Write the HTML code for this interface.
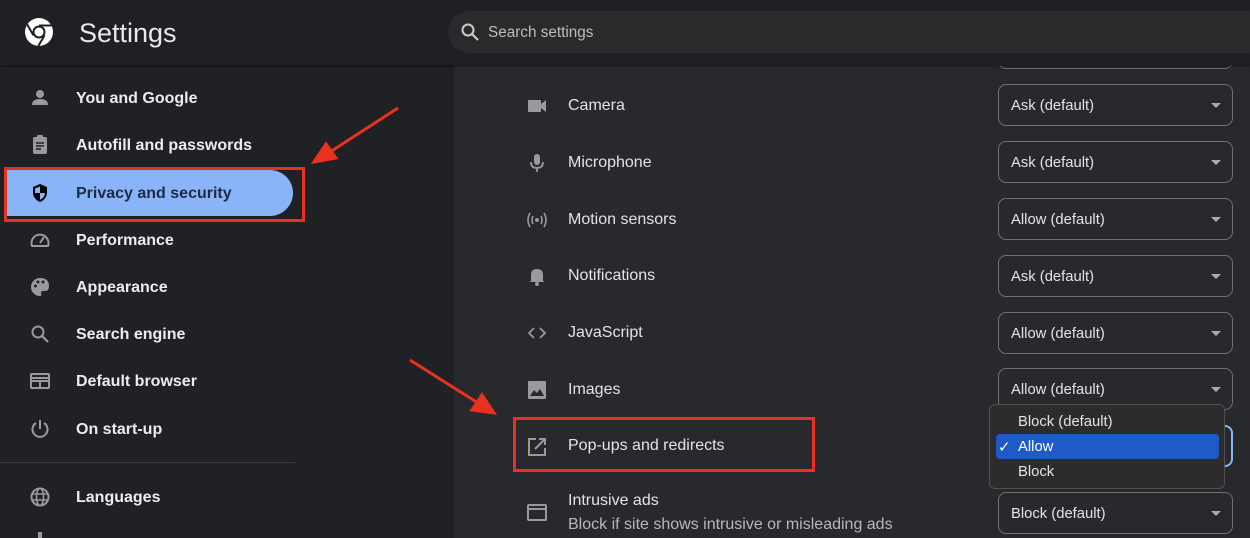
<!DOCTYPE html>
<html><head><style>
*{margin:0;padding:0;box-sizing:border-box}
body{width:1250px;height:538px;overflow:hidden;background:#202124;font-family:"Liberation Sans",sans-serif;color:#e3e3e3;position:relative}
.hdr{position:absolute;left:0;top:0;width:1250px;height:65px;background:#1f2023;box-shadow:0 1px 3px rgba(0,0,0,.5);z-index:2}
.title{position:absolute;left:79px;top:18px;font-size:27px;color:#e8e8e8}
.search{position:absolute;left:448px;top:11px;width:820px;height:42px;border-radius:21px;background:#2a2a2d}
.search span{position:absolute;left:40px;top:13px;font-size:15.3px;color:#bdbdbd}
.side{position:absolute;left:0;top:65px;width:454px;height:473px;background:#202124}
.item{position:absolute;left:0;height:46px;width:300px;font-size:16px;font-weight:bold;color:#ececec}
.item span{position:absolute;left:76px;top:15px}
.item svg{position:absolute;left:29px;top:12px}
.sel{left:5px;width:288px;background:#8ab4f8;border-radius:0 23px 23px 0;color:#1f2a44}
.main{position:absolute;left:454px;top:65px;width:796px;height:473px;background:#28292c}
.row{position:absolute;left:568px;font-size:16px;color:#e3e3e3}
.ic{position:absolute;left:526px}
.dd{position:absolute;left:998px;width:235px;height:42px;border:1px solid #707074;border-radius:8px;font-size:14.8px;color:#e3e3e3}
.dd span{position:absolute;left:12px;top:13px}
.dd i{position:absolute;right:11px;top:18px;border-left:5px solid transparent;border-right:5px solid transparent;border-top:5px solid #aaa}
.menu{position:absolute;left:989px;top:404px;width:236px;height:85px;background:#2d2b2b;border:1px solid #505050;border-radius:6px;font-size:14.8px;z-index:3}
.menu .t{position:absolute;left:28px}
.hl{position:absolute;left:6px;top:29px;width:223px;height:25px;background:#1f5bc7;border-radius:4px}
.red{position:absolute;border:3px solid #e8321f;z-index:4}
</style></head><body>
<div class="hdr">
<svg style="position:absolute;left:24px;top:17px" width="30" height="30" viewBox="0 0 30 30"><circle cx="15" cy="15" r="14" fill="#fff"/><circle cx="15" cy="15" r="6.5" fill="#1f2023"/><circle cx="15" cy="15" r="4.5" fill="#fff"/><path d="M15 8.5 L27.5 8.5" stroke="#1f2023" stroke-width="2"/><path d="M9.4 18.2 L3.2 7.5" stroke="#1f2023" stroke-width="2"/><path d="M20.6 18.2 L14.3 29" stroke="#1f2023" stroke-width="2"/></svg>
<div class="title">Settings</div>
<div class="search"><svg style="position:absolute;left:13px;top:12px" width="18" height="18" viewBox="0 0 18 18"><circle cx="7" cy="7" r="5.5" fill="none" stroke="#ccc" stroke-width="2"/><path d="M11 11 L17 17" stroke="#ccc" stroke-width="2.2"/></svg><span>Search settings</span></div>
</div>
<div class="side"></div>
<div class="item" style="top:75px"><svg width="22" height="22" viewBox="0 0 22 22"><circle cx="11" cy="7" r="4" fill="#9a9a9e"/><path d="M3 18 Q3 12 11 12 Q19 12 19 18Z" fill="#9a9a9e"/></svg><span>You and Google</span></div>
<div class="item" style="top:122px"><svg width="22" height="22" viewBox="0 0 22 22"><rect x="4" y="3" width="14" height="17" rx="2" fill="#9a9a9e"/><rect x="8" y="1" width="6" height="4" rx="1" fill="#9a9a9e"/><path d="M7 9h8M7 12h8M7 15h5" stroke="#202124" stroke-width="1.5"/></svg><span>Autofill and passwords</span></div>
<div class="item sel" style="top:170px"><svg style="left:24px" width="22" height="22" viewBox="0 0 22 22"><path d="M11 2 L18 5 V10 Q18 17 11 20 Q4 17 4 10 V5Z" fill="#000"/><path d="M11 4.5 V11 H16 Q15.5 16 11 17.8Z M11 11 H6 V6.5 L11 4.5Z" fill="#8ab4f8"/></svg><span style="left:71px">Privacy and security</span></div>
<div class="item" style="top:217px"><svg width="22" height="22" viewBox="0 0 22 22"><path d="M3 17 A8.5 8.5 0 1 1 19 17Z" fill="none" stroke="#9a9a9e" stroke-width="2"/><path d="M11 14 L15 8" stroke="#9a9a9e" stroke-width="2"/></svg><span>Performance</span></div>
<div class="item" style="top:264px"><svg width="22" height="22" viewBox="0 0 22 22"><path d="M11 2 A9 9 0 0 0 11 20 Q13 20 12 17 Q12 15 14 15 H16 Q20 15 20 10 Q20 2 11 2Z" fill="#9a9a9e"/><circle cx="6.5" cy="10" r="1.5" fill="#202124"/><circle cx="9" cy="6" r="1.5" fill="#202124"/><circle cx="14" cy="6" r="1.5" fill="#202124"/></svg><span>Appearance</span></div>
<div class="item" style="top:311px"><svg width="22" height="22" viewBox="0 0 22 22"><circle cx="9" cy="9" r="5.5" fill="none" stroke="#9a9a9e" stroke-width="2"/><path d="M13 13 L19 19" stroke="#9a9a9e" stroke-width="2.2"/></svg><span>Search engine</span></div>
<div class="item" style="top:358px"><svg width="22" height="22" viewBox="0 0 22 22"><rect x="2" y="4" width="18" height="14" rx="1" fill="none" stroke="#9a9a9e" stroke-width="2"/><path d="M2 8H20M11 11V18M3 11H19" stroke="#9a9a9e" stroke-width="2"/></svg><span>Default browser</span></div>
<div class="item" style="top:406px"><svg width="22" height="22" viewBox="0 0 22 22"><path d="M7 5 A7.5 7.5 0 1 0 15 5" fill="none" stroke="#9a9a9e" stroke-width="2"/><path d="M11 2V11" stroke="#9a9a9e" stroke-width="2"/></svg><span>On start-up</span></div>
<div style="position:absolute;left:0;top:462px;width:295px;height:1px;background:#3a3b3e"></div>
<div class="item" style="top:474px"><svg width="22" height="22" viewBox="0 0 22 22"><circle cx="11" cy="11" r="8.5" fill="none" stroke="#9a9a9e" stroke-width="2"/><ellipse cx="11" cy="11" rx="3.5" ry="8.5" fill="none" stroke="#9a9a9e" stroke-width="1.6"/><path d="M3 8H19M3 14H19" stroke="#9a9a9e" stroke-width="1.6"/></svg><span>Languages</span></div>
<div style="position:absolute;left:38px;top:532px;width:4px;height:6px;background:#9a9a9e"></div>
<div class="main"></div>
<div class="dd" style="border-top:none;border-radius:0 0 8px 8px;top:30px;height:39px"></div>
<div class="hdr" style="box-shadow:none;height:65px;background:#1f2023;z-index:1"></div>
<svg class="ic" style="top:97px" width="22" height="18" viewBox="0 0 22 18"><rect x="2" y="3" width="13" height="12" rx="1" fill="#9a9a9e"/><path d="M15 7 L20 3 V15 L15 11Z" fill="#9a9a9e"/></svg>
<div class="row" style="top:97px">Camera</div>
<svg class="ic" style="top:152px" width="22" height="22" viewBox="0 0 22 22"><rect x="8" y="2" width="6" height="11" rx="3" fill="#9a9a9e"/><path d="M5 10 Q5 16 11 16 Q17 16 17 10M11 16V20" fill="none" stroke="#9a9a9e" stroke-width="1.8"/></svg>
<div class="row" style="top:154px">Microphone</div>
<svg class="ic" style="top:210px" width="22" height="20" viewBox="0 0 22 20"><circle cx="11" cy="10" r="2" fill="#9a9a9e"/><path d="M7 6 Q5 10 7 14M15 6 Q17 10 15 14M4 3 Q0 10 4 17M18 3 Q22 10 18 17" fill="none" stroke="#9a9a9e" stroke-width="1.6"/></svg>
<div class="row" style="top:211px">Motion sensors</div>
<svg class="ic" style="top:265px" width="22" height="22" viewBox="0 0 22 22"><path d="M5 16 V10 Q5 4 11 4 Q17 4 17 10 V16 L19 17 H3Z" fill="#9a9a9e"/><circle cx="11" cy="19" r="2" fill="#9a9a9e"/></svg>
<div class="row" style="top:267px">Notifications</div>
<svg class="ic" style="top:323px" width="22" height="20" viewBox="0 0 22 20"><path d="M8 5 L3 10 L8 15M14 5 L19 10 L14 15" fill="none" stroke="#9a9a9e" stroke-width="1.8"/></svg>
<div class="row" style="top:324px">JavaScript</div>
<svg class="ic" style="top:379px" width="22" height="22" viewBox="0 0 22 22"><rect x="2" y="2" width="18" height="18" rx="1" fill="#9a9a9e"/><path d="M4 17 L8 11 L11 14 L14 10 L18 17Z" fill="#28292c"/></svg>
<div class="row" style="top:381px">Images</div>
<svg class="ic" style="top:436px" width="22" height="22" viewBox="0 0 22 22"><path d="M10 3H3V19H19V12" fill="none" stroke="#9a9a9e" stroke-width="2"/><path d="M9 13 L19 3M13 3H19V9" fill="none" stroke="#9a9a9e" stroke-width="2"/></svg>
<div class="row" style="top:437px">Pop-ups and redirects</div>
<svg class="ic" style="top:503px" width="22" height="20" viewBox="0 0 22 20"><rect x="2" y="2" width="18" height="15" rx="1" fill="none" stroke="#9a9a9e" stroke-width="2"/><path d="M2 6H20" stroke="#9a9a9e" stroke-width="2"/></svg>
<div class="row" style="top:492px">Intrusive ads</div>
<div class="row" style="top:516px;color:#b8b8bb">Block if site shows intrusive or misleading ads</div>
<div class="dd" style="top:84px"><span>Ask (default)</span><i></i></div>
<div class="dd" style="top:141px"><span>Ask (default)</span><i></i></div>
<div class="dd" style="top:198px"><span>Allow (default)</span><i></i></div>
<div class="dd" style="top:255px"><span>Ask (default)</span><i></i></div>
<div class="dd" style="top:312px"><span>Allow (default)</span><i></i></div>
<div class="dd" style="top:368px"><span>Allow (default)</span><i></i></div>
<div class="dd" style="top:425px;border-color:#8ab4f8;border-width:2px"></div>
<div class="dd" style="top:492px"><span>Block (default)</span><i></i></div>
<div class="menu"><div class="hl"></div><div class="t" style="top:9px">Block (default)</div><div class="t" style="top:34px;color:#fff"><span style="position:absolute;left:-20px">✓</span>Allow</div><div class="t" style="top:59px">Block</div></div>
<div class="red" style="left:4px;top:167px;width:301px;height:55px"></div>
<div class="red" style="left:513px;top:417px;width:302px;height:55px"></div>
<svg style="position:absolute;left:0;top:0;z-index:5" width="1250" height="538"><g stroke="#e8321f" stroke-width="3" fill="#e8321f"><path d="M398 108 L330 152"/><path d="M314 162 L326 144 L336 158Z"/><path d="M410 360 L478 403"/><path d="M494 413 L472 410 L482 395Z"/></g></svg>
</body></html>
